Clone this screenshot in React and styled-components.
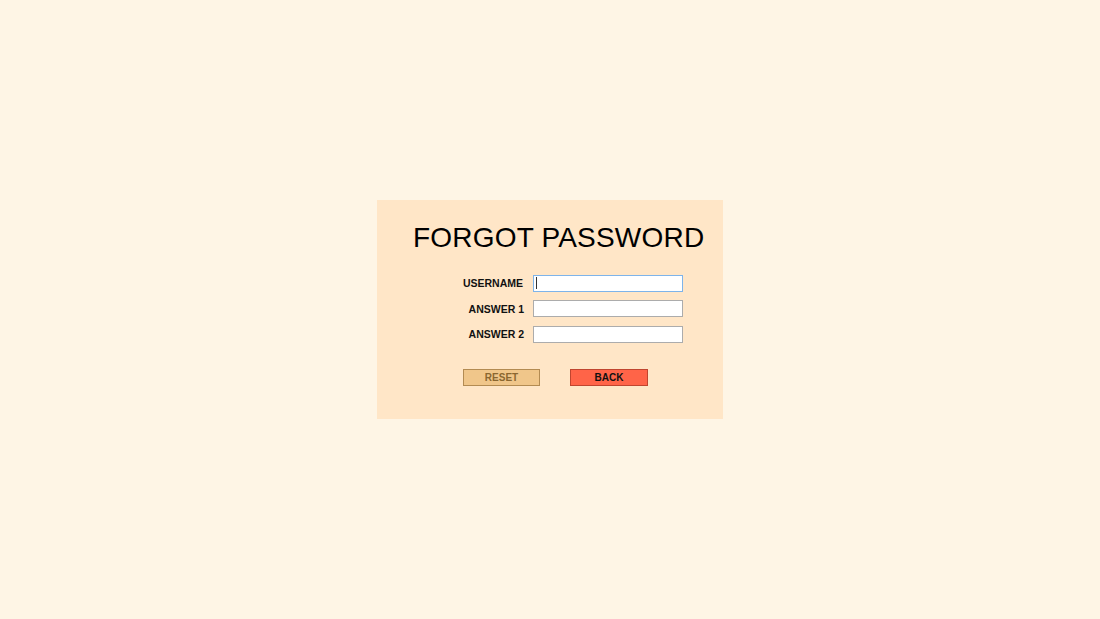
import React from "react";
import styled, { createGlobalStyle } from "styled-components";

const GlobalStyle = createGlobalStyle`
  html, body {
    margin: 0;
    padding: 0;
    background: #fef5e5;
  }
  body {
    font-family: "Liberation Sans", Arial, sans-serif;
  }
`;

const Page = styled.div`
  width: 100vw;
  height: 100vh;
  display: flex;
  align-items: center;
  justify-content: center;
  background: #fef5e5;
`;

const Panel = styled.div`
  box-sizing: border-box;
  width: 346px;
  height: 219px;
  margin-top: -1px;
  background: #ffe6c7;
  padding: 22px 0 0 0;
  display: flex;
  flex-direction: column;
`;

const Title = styled.h1`
  margin: 0 0 0 36px;
  font-size: 28px;
  line-height: 32px;
  letter-spacing: 0.2px;
  font-weight: normal;
  color: #000;
`;

const Form = styled.div`
  margin-top: 21px;
  display: grid;
  grid-template-columns: 147px 150px;
  column-gap: 9px;
  row-gap: 8.5px;
  align-items: center;
`;

const Label = styled.label`
  text-align: right;
  font-size: 10.5px;
  font-weight: bold;
  color: #111;
  padding-right: ${(p) => (p.$tight ? "1px" : "0")};
`;

const Input = styled.input`
  box-sizing: border-box;
  width: 150px;
  height: 17px;
  margin: 0;
  padding: 0 2px;
  font-family: "Liberation Sans", Arial, sans-serif;
  font-size: 11px;
  background: #fff;
  border: 1px solid #acacac;
  outline: none;
`;

const FocusedField = styled.div`
  box-sizing: border-box;
  width: 150px;
  height: 17px;
  background: #fff;
  border: 1px solid #7eb4ea;
  display: flex;
  align-items: center;
`;

const Cursor = styled.span`
  display: inline-block;
  width: 1px;
  height: 12px;
  background: #333;
  margin-left: 2px;
`;

const Buttons = styled.div`
  margin: 26px 0 0 86px;
  display: flex;
  gap: 30px;
`;

const Button = styled.button`
  box-sizing: border-box;
  width: ${(p) => p.$w}px;
  height: 17px;
  margin: 0;
  padding: 0;
  font-family: "Liberation Sans", Arial, sans-serif;
  font-size: 10px;
  font-weight: bold;
  background: ${(p) => p.$bg};
  border: 1px solid ${(p) => p.$border};
  color: ${(p) => p.$color};
  cursor: pointer;
`;

export default function App() {
  return (
    <>
      <GlobalStyle />
      <Page>
        <Panel>
          <Title>FORGOT PASSWORD</Title>
          <Form>
            <Label $tight>USERNAME</Label>
            <FocusedField>
              <Cursor />
            </FocusedField>
            <Label>ANSWER 1</Label>
            <Input type="text" />
            <Label>ANSWER 2</Label>
            <Input type="text" />
          </Form>
          <Buttons>
            <Button $w={77} $bg="#f0c68a" $border="#b38b52" $color="#8a6630">
              RESET
            </Button>
            <Button $w={78} $bg="#ff6448" $border="#c0452f" $color="#111">
              BACK
            </Button>
          </Buttons>
        </Panel>
      </Page>
    </>
  );
}
